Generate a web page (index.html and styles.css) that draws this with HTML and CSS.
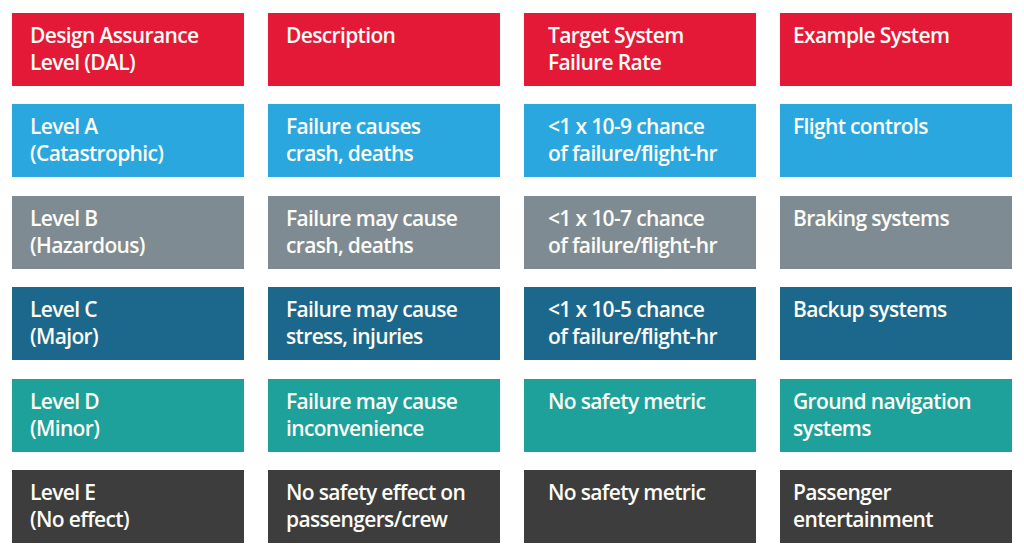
FILE: index.html
```html
<!DOCTYPE html>
<html lang="en">
<head>
<meta charset="utf-8">
<title>Design Assurance Levels</title>
<link rel="stylesheet" href="styles.css">
</head>
<body>
<div class="table">
  <div class="cell head">Design Assurance<br>Level (DAL)</div>
  <div class="cell head">Description</div>
  <div class="cell head">Target System<br>Failure Rate</div>
  <div class="cell head">Example System</div>

  <div class="cell lvl-a">Level A<br>(Catastrophic)</div>
  <div class="cell lvl-a">Failure causes<br>crash, deaths</div>
  <div class="cell lvl-a">&lt;1 x 10-9 chance<br>of failure/flight-hr</div>
  <div class="cell lvl-a">Flight controls</div>

  <div class="cell lvl-b">Level B<br>(Hazardous)</div>
  <div class="cell lvl-b">Failure may cause<br>crash, deaths</div>
  <div class="cell lvl-b">&lt;1 x 10-7 chance<br>of failure/flight-hr</div>
  <div class="cell lvl-b">Braking systems</div>

  <div class="cell lvl-c">Level C<br>(Major)</div>
  <div class="cell lvl-c">Failure may cause<br>stress, injuries</div>
  <div class="cell lvl-c">&lt;1 x 10-5 chance<br>of failure/flight-hr</div>
  <div class="cell lvl-c">Backup systems</div>

  <div class="cell lvl-d">Level D<br>(Minor)</div>
  <div class="cell lvl-d">Failure may cause<br>inconvenience</div>
  <div class="cell lvl-d">No safety metric</div>
  <div class="cell lvl-d">Ground navigation<br>systems</div>

  <div class="cell lvl-e">Level E<br>(No effect)</div>
  <div class="cell lvl-e">No safety effect on<br>passengers/crew</div>
  <div class="cell lvl-e">No safety metric</div>
  <div class="cell lvl-e">Passenger<br>entertainment</div>
</div>
</body>
</html>
```

FILE: styles.css
```css
html, body {
  margin: 0;
  padding: 0;
  background: #ffffff;
}
body {
  font-family: "Open Sans", "Noto Sans", sans-serif;
}
.table {
  display: grid;
  grid-template-columns: repeat(4, 232px);
  grid-auto-rows: 73px;
  column-gap: 24px;
  row-gap: 18.4px;
  padding: 13px 0 0 12px;
}
.cell {
  box-sizing: border-box;
  padding: 9px 6px 0 18px;
  color: #fdfcf6;
  font-size: 21px;
  font-weight: 600;
  line-height: 27px;
  letter-spacing: -0.65px;
  white-space: nowrap;
}
.cell:nth-child(4n+3) { padding-left: 24px; }
.cell:nth-child(4n) { padding-left: 13px; }
.head { background: #e31937; }
.lvl-a { background: #2aa7df; }
.lvl-b { background: #7f8b92; }
.lvl-c { background: #1b688c; }
.lvl-d { background: #1ea09b; }
.lvl-e { background: #3d3d3d; }
```
